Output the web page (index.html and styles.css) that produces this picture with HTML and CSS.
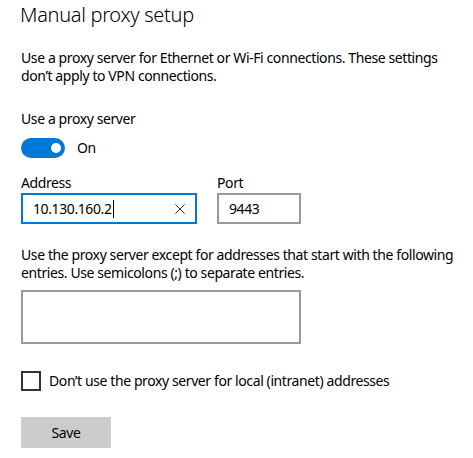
FILE: index.html
```html
<!DOCTYPE html>
<html>
<head>
<meta charset="utf-8">
<link rel="stylesheet" href="styles.css">
</head>
<body>
<div class="page">
  <h1 class="title">Manual proxy setup</h1>
  <p class="desc desc1">Use a proxy server for Ethernet or Wi-Fi connections. These settings don’t apply to VPN connections.</p>
  <div class="label toggle-label">Use a proxy server</div>
  <div class="toggle-row">
    <span class="toggle"><span class="knob"></span></span>
    <span class="toggle-text">On</span>
  </div>
  <div class="fields">
    <div class="field">
      <div class="label field-label">Address</div>
      <div class="input input-address">
        <span class="value">10.130.160.2</span><span class="caret"></span>
        <svg class="clear" width="10" height="10" viewBox="0 0 10 10"><path d="M0.5 0.5 L9.5 9.5 M9.5 0.5 L0.5 9.5" stroke="#333" stroke-width="1" fill="none"/></svg>
      </div>
    </div>
    <div class="field">
      <div class="label field-label">Port</div>
      <div class="input input-port"><span class="value">9443</span></div>
    </div>
  </div>
  <p class="desc desc2">Use the proxy server except for addresses that start with the following entries. Use semicolons (;) to separate entries.</p>
  <div class="textarea"></div>
  <div class="check-row">
    <span class="checkbox"></span>
    <span class="check-text">Don’t use the proxy server for local (intranet) addresses</span>
  </div>
  <button class="save">Save</button>
</div>
</body>
</html>
```
FILE: styles.css
```css
html, body {
  margin: 0;
  padding: 0;
  background: #ffffff;
}
.page {
  padding: 0 0 0 21px;
  font-family: "Noto Sans", "Open Sans", sans-serif;
  font-size: 14px;
  letter-spacing: -0.4px;
  color: #000000;
}
.title {
  margin: 1px 0 0 -1px;
  font-size: 20px;
  line-height: 28px;
  font-weight: 300;
  letter-spacing: -0.3px;
}
.desc {
  margin: 20px 0 0;
  line-height: 18px;
}
.desc1 {
  max-width: 430px;
}
.label {
  line-height: 19px;
}
.toggle-label {
  margin-top: 24px;
}
.toggle-row {
  margin-top: 10px;
  display: flex;
  align-items: center;
  height: 20px;
}
.toggle {
  width: 44px;
  height: 20px;
  border-radius: 10px;
  background: #0078d7;
  position: relative;
  box-sizing: border-box;
}
.knob {
  position: absolute;
  right: 4px;
  top: 5px;
  width: 10px;
  height: 10px;
  border-radius: 50%;
  background: #ffffff;
}
.toggle-text {
  margin-left: 12px;
  line-height: 20px;
}
.fields {
  margin-top: 15px;
  display: flex;
  gap: 20px;
}
.field-label {
  margin-bottom: 1px;
}
.input {
  height: 31px;
  box-sizing: border-box;
  border: 2px solid #999999;
  display: flex;
  align-items: center;
  padding: 0 10px;
}
.input-address {
  width: 176px;
  border-color: #0078d7;
}
.input-port {
  width: 84px;
}
.caret {
  width: 1px;
  height: 18px;
  background: #000;
  margin-left: 1px;
}
.clear {
  margin-left: auto;
  margin-right: 0;
}
.desc2 {
  margin-top: 22px;
}
.textarea {
  margin-top: 8px;
  width: 280px;
  height: 54px;
  box-sizing: border-box;
  border: 2px solid #999999;
}
.check-row {
  margin-top: 27px;
  display: flex;
  align-items: center;
  height: 20px;
}
.checkbox {
  width: 20px;
  height: 20px;
  box-sizing: border-box;
  border: 2px solid #333333;
}
.check-text {
  margin-left: 8px;
  line-height: 20px;
}
.save {
  display: block;
  margin-top: 26px;
  width: 90px;
  height: 31px;
  border: none;
  background: #cccccc;
  font-family: inherit;
  font-size: 14px;
  letter-spacing: inherit;
  color: #000;
  padding: 0;
}
```
